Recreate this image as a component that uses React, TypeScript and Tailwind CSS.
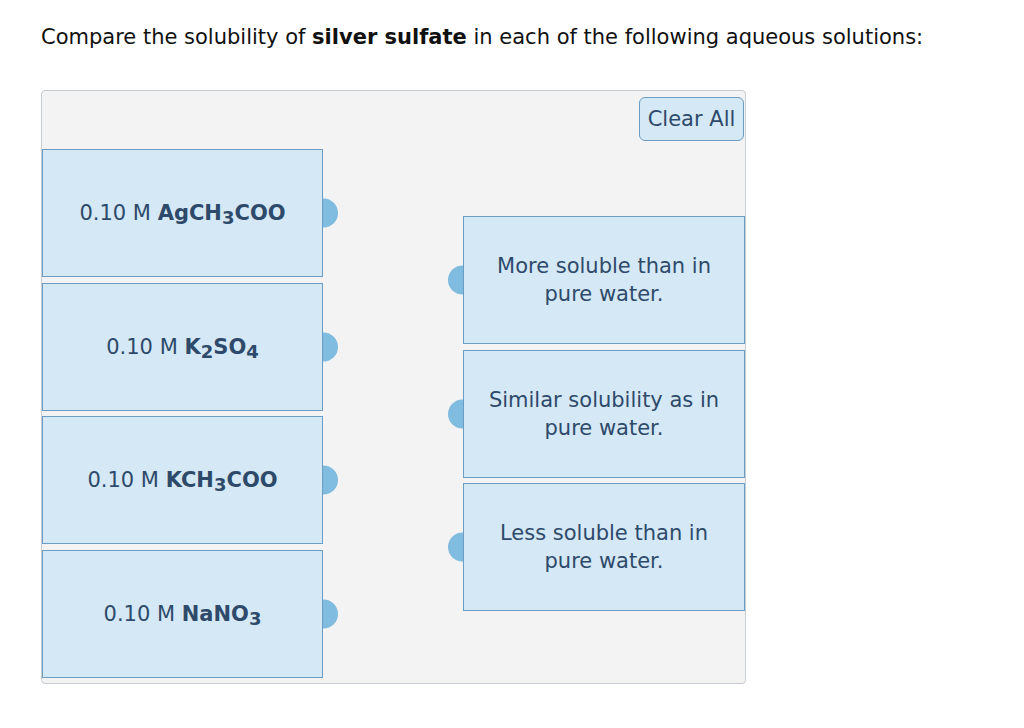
import React from "react";

const font = { fontFamily: '"DejaVu Sans", Verdana, sans-serif' };

type Item = { key: string; content: React.ReactNode };

// subscript digits sit ~4px under the baseline, not much smaller than the text
const Sub = ({ children }: { children: React.ReactNode }) => (
  <span className="relative top-[4px] text-[18px] leading-none">{children}</span>
);

const leftItems: Item[] = [
  {
    key: "ag",
    content: (
      <>
        0.10 M{" "}
        <b>
          AgCH<Sub>3</Sub>COO
        </b>
      </>
    ),
  },
  {
    key: "k2so4",
    content: (
      <>
        0.10 M{" "}
        <b>
          K<Sub>2</Sub>SO<Sub>4</Sub>
        </b>
      </>
    ),
  },
  {
    key: "kch",
    content: (
      <>
        0.10 M{" "}
        <b>
          KCH<Sub>3</Sub>COO
        </b>
      </>
    ),
  },
  {
    key: "nano3",
    content: (
      <>
        0.10 M{" "}
        <b>
          NaNO<Sub>3</Sub>
        </b>
      </>
    ),
  },
];

const rightItems: Item[] = [
  { key: "more", content: <>More soluble than in pure water.</> },
  { key: "similar", content: <>Similar solubility as in pure water.</> },
  { key: "less", content: <>Less soluble than in pure water.</> },
];

function Card({ item, side }: { item: Item; side: "left" | "right" }) {
  return (
    <div className="relative">
      {side === "left" ? (
        <div className="absolute right-[-15px] top-1/2 h-[29px] w-[15px] -translate-y-1/2 rounded-r-full bg-[#7fbcdf]" />
      ) : (
        <div className="absolute left-[-15px] top-1/2 h-[29px] w-[15px] -translate-y-1/2 rounded-l-full bg-[#7fbcdf]" />
      )}
      <div className="flex h-[128px] items-center justify-center border border-[#6b9cc4] bg-[#d5e8f5] px-[20px] text-center text-[21px] leading-[28px] text-[#2e4a6b]">
        <div>{item.content}</div>
      </div>
    </div>
  );
}

export default function App() {
  return (
    <div className="min-h-screen bg-white pl-[41px] pt-[24px]" style={font}>
      <p className="text-[21px] leading-[26px] text-[#111]">
        Compare the solubility of <b>silver sulfate</b> in each of the following aqueous solutions:
      </p>

      <div className="mt-[40px] flex h-[594px] w-[705px] justify-between rounded-[4px] border border-[#c7ccd2] bg-[#f3f3f3]">
        <div className="flex w-[281px] flex-col gap-[5.5px] pt-[58px]">
          {leftItems.map((item) => (
            <Card key={item.key} item={item} side="left" />
          ))}
        </div>

        <div className="flex w-[282px] flex-col pt-[6px]">
          <div className="flex justify-end pr-[1px]">
            <button
              type="button"
              className="h-[44px] w-[105px] rounded-[6px] border border-[#6b9cc4] bg-[#d5e8f5] pt-[2px] text-[21px] text-[#2e4a6b]"
            >
              Clear All
            </button>
          </div>
          <div className="mt-[75px] flex flex-col gap-[5.5px]">
            {rightItems.map((item) => (
              <Card key={item.key} item={item} side="right" />
            ))}
          </div>
        </div>
      </div>
    </div>
  );
}
